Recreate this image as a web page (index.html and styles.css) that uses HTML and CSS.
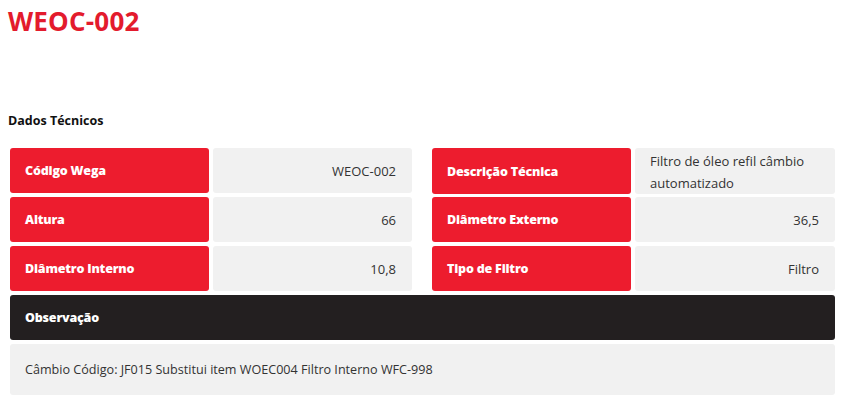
FILE: index.html
```html
<!DOCTYPE html>
<html lang="pt">
<head>
<meta charset="utf-8">
<title>WEOC-002</title>
<link rel="stylesheet" href="styles.css">
</head>
<body>
<h1 class="title">WEOC-002</h1>
<h2 class="section">Dados Técnicos</h2>
<div class="specs">
  <div class="col">
    <div class="row"><div class="label">Código Wega</div><div class="value">WEOC-002</div></div>
    <div class="row"><div class="label">Altura</div><div class="value">66</div></div>
    <div class="row"><div class="label">Diâmetro Interno</div><div class="value">10,8</div></div>
  </div>
  <div class="col">
    <div class="row"><div class="label">Descrição Técnica</div><div class="value text">Filtro de óleo refil câmbio automatizado</div></div>
    <div class="row"><div class="label">Diâmetro Externo</div><div class="value">36,5</div></div>
    <div class="row"><div class="label">Tipo de Filtro</div><div class="value">Filtro</div></div>
  </div>
  <div class="obs">
    <div class="obs-head">Observação</div>
    <div class="obs-body">Câmbio Código: JF015 Substitui item WOEC004 Filtro Interno WFC-998</div>
  </div>
</div>
</body>
</html>
```
FILE: styles.css
```css
body {
  margin: 0;
  padding: 0 8px 0 8px;
  font-family: "Open Sans", "Liberation Sans", sans-serif;
  background: #fff;
  color: #333;
}
.title {
  margin: 0;
  padding-top: 4px;
  font-size: 26px;
  line-height: 34px;
  font-weight: 700;
  letter-spacing: 0.2px;
  color: #e31b2d;
}
.section {
  margin: 75px 0 0 0;
  font-size: 12.5px;
  line-height: 16px;
  font-weight: 700;
  color: #111;
}
.specs {
  margin: 19px 0 0 2px;
  width: 825px;
  display: grid;
  grid-template-columns: 402px 403px;
  column-gap: 20px;
  row-gap: 4px;
}
.col {
  display: flex;
  flex-direction: column;
  gap: 4px;
}
.row {
  display: grid;
  grid-template-columns: 199px 1fr;
  column-gap: 4px;
  height: 45px;
}
.label {
  background: #ed1c2e;
  color: #fff;
  border-radius: 3px;
  font-weight: 800;
  font-size: 12.5px;
  letter-spacing: -0.2px;
  display: flex;
  align-items: center;
  padding-left: 15px;
}
.value {
  background: #f1f1f1;
  border-radius: 3px;
  font-size: 13px;
  display: flex;
  align-items: center;
  justify-content: flex-end;
  padding-right: 16px;
  color: #333;
}
.value.text {
  justify-content: flex-start;
  padding: 0 15px;
  line-height: 22px;
  padding-top: 2px;
}
.obs {
  grid-column: 1 / span 2;
  display: flex;
  flex-direction: column;
  gap: 4px;
}
.obs-head {
  background: #231f20;
  color: #fff;
  border-radius: 3px;
  height: 45px;
  display: flex;
  align-items: center;
  padding-left: 15px;
  font-weight: 800;
  font-size: 12.5px;
  letter-spacing: -0.2px;
}
.obs-body {
  background: #f1f1f1;
  border-radius: 3px;
  height: 51px;
  display: flex;
  align-items: center;
  padding-left: 15px;
  font-size: 12.6px;
  color: #333;
}
```
